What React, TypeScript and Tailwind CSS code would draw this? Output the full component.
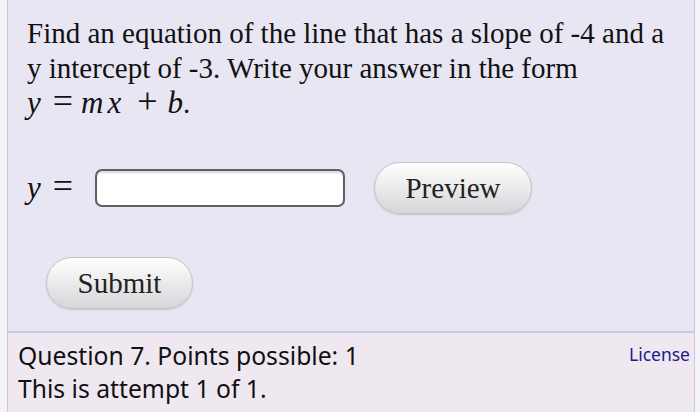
import React from 'react';

const serif = "font-['Liberation_Serif','Times_New_Roman',serif]";
const sans = "font-['Noto_Sans','Open_Sans',sans-serif]";

function MathVar({ children, className = '' }: { children: React.ReactNode; className?: string }) {
  return <span className={`text-[31px] leading-[20px] italic ${className}`}>{children}</span>;
}

function MathOp({ children, className }: { children: React.ReactNode; className: string }) {
  return <span className={`text-[36px] leading-[20px] ${className}`}>{children}</span>;
}

export default function App() {
  return (
    <div className="h-[412px] w-[700px] overflow-hidden bg-[#f4f3f8] pl-[7px] pr-[5px]">
      <div className="flex h-full flex-col border-x border-[#c9c7e0]">

        {/* Question body */}
        <div className={`h-[331px] shrink-0 bg-[#e8e6f3] pl-[19px] pt-[16px] text-[29px] leading-[35px] text-[#111] ${serif}`}>
          <p className="whitespace-nowrap">
            Find an equation of the line that has a slope of -4 and a
            <br />
            y intercept of -3. Write your answer in the form
            <br />
            <MathVar>y</MathVar>
            <MathOp className="ml-[12px] mr-[8px]">=</MathOp>
            <MathVar className="mr-[4px]">m</MathVar>
            <MathVar>x</MathVar>
            <MathOp className="ml-[16px] mr-[10px]">+</MathOp>
            <MathVar>b</MathVar>.
          </p>

          {/* Answer row */}
          <div className="mt-[41px] flex items-center">
            <span className="w-[68px] whitespace-nowrap">
              <MathVar>y</MathVar>
              <MathOp className="ml-[12px]">=</MathOp>
            </span>
            <input
              type="text"
              className="h-[38px] w-[250px] rounded-[7px] border-2 border-[#5f5f66] bg-white shadow-[inset_0_2px_2px_rgba(0,0,0,0.15)] outline-none"
            />
            <button
              type="button"
              className="ml-[29px] h-[52px] w-[158px] rounded-full border border-[#c4c4c8] bg-gradient-to-b from-white to-[#d6d6d9] text-[29px] text-[#222] shadow-[0_1px_2px_rgba(0,0,0,0.15)]"
            >
              Preview
            </button>
          </div>

          {/* Submit */}
          <button
            type="button"
            className="ml-[19px] mt-[43px] h-[52px] w-[147px] rounded-full border border-[#c4c4c8] bg-gradient-to-b from-white to-[#d6d6d9] text-[29px] text-[#222] shadow-[0_1px_2px_rgba(0,0,0,0.15)]"
          >
            Submit
          </button>
        </div>

        {/* Footer */}
        <div className={`flex flex-1 justify-between border-t-2 border-[#cac7e2] bg-[#efe8f1] pl-[10px] pr-[4px] pt-[6px] ${sans}`}>
          <div className="text-[24.7px] leading-[33px] text-[#111]">
            <div>Question 7. Points possible: 1</div>
            <div>This is attempt 1 of 1.</div>
          </div>
          <a href="#" className="pt-[3px] text-[17.5px] leading-[24px] text-[#1c1a8c]">
            License
          </a>
        </div>

      </div>
    </div>
  );
}
